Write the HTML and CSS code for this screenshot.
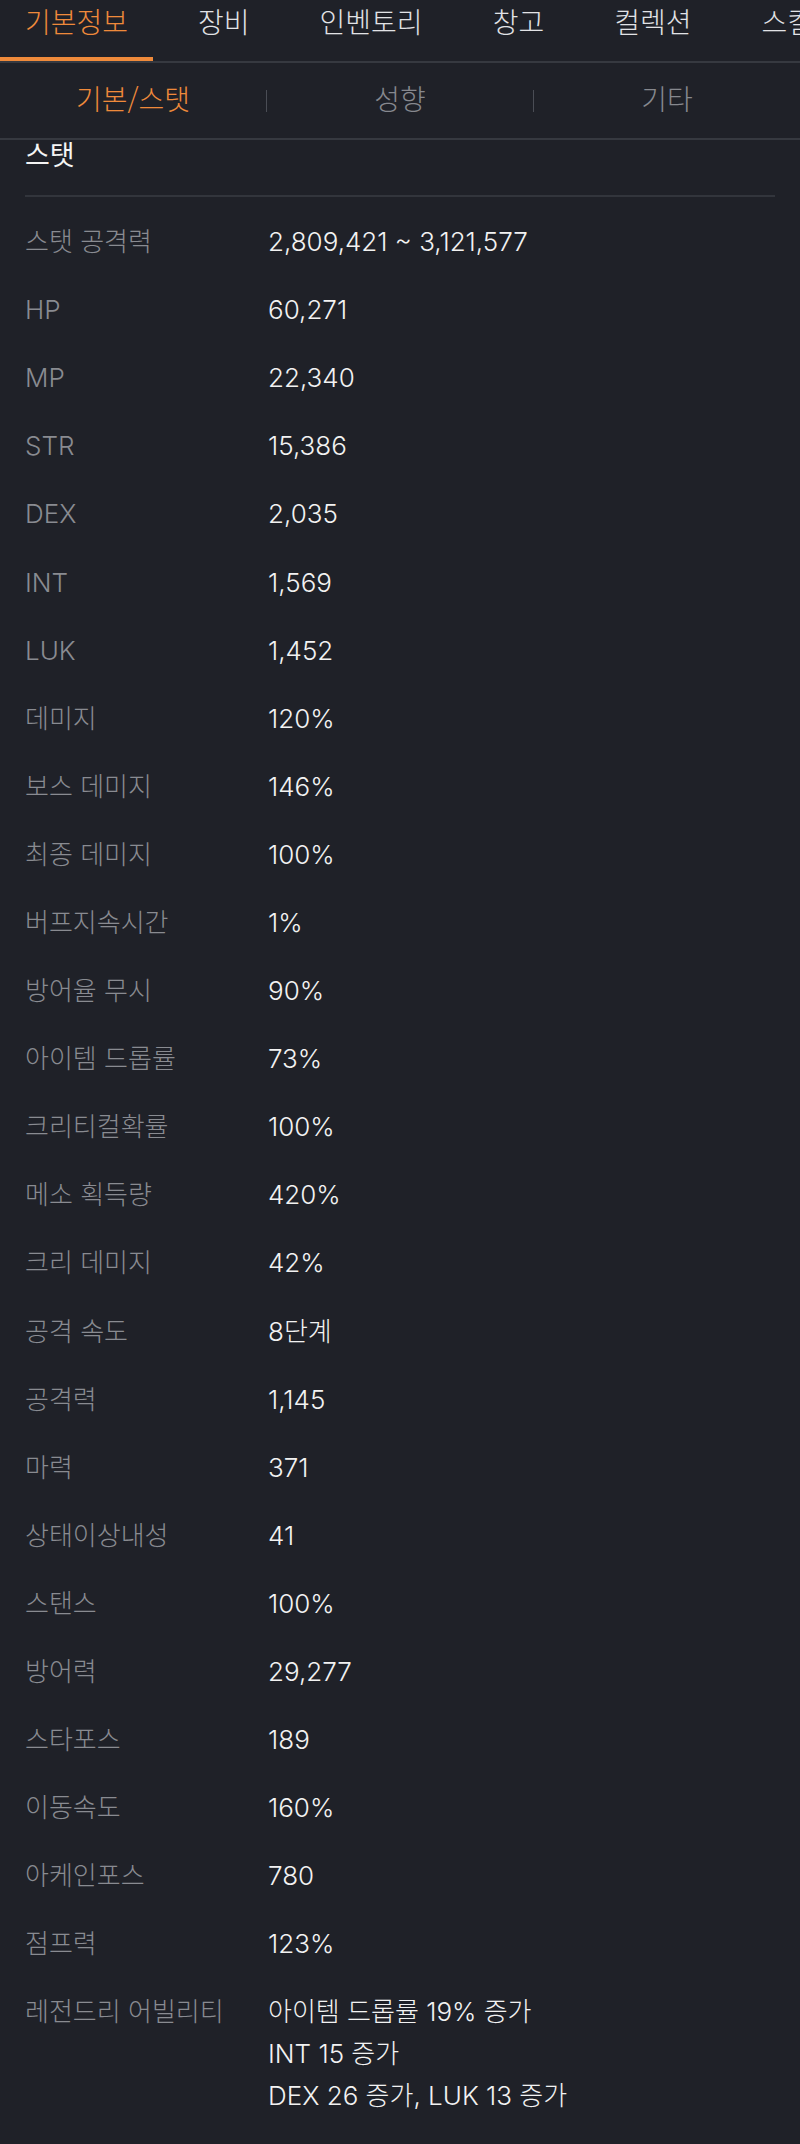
FILE: index.html
```html
<!DOCTYPE html>
<html lang="ko">
<head>
<meta charset="utf-8">
<title>기본정보 - 스탯</title>
<link rel="stylesheet" href="styles.css">
</head>
<body>
<nav class="tabs">
  <div class="tab active">기본정보</div>
  <div class="tab">장비</div>
  <div class="tab">인벤토리</div>
  <div class="tab">창고</div>
  <div class="tab">컬렉션</div>
  <div class="tab">스킬</div>
</nav>
<div class="subtabs">
  <div class="subtab active">기본/스탯</div>
  <span class="sep"></span>
  <div class="subtab">성향</div>
  <span class="sep"></span>
  <div class="subtab">기타</div>
</div>
<section class="stats">
  <h2 class="heading">스탯</h2>
  <div class="list">
    <div class="row"><span class="label">스탯 공격력</span><div class="value">2,809,421 ~ 3,121,577</div></div>
    <div class="row"><span class="label">HP</span><div class="value">60,271</div></div>
    <div class="row"><span class="label">MP</span><div class="value">22,340</div></div>
    <div class="row"><span class="label">STR</span><div class="value">15,386</div></div>
    <div class="row"><span class="label">DEX</span><div class="value">2,035</div></div>
    <div class="row"><span class="label">INT</span><div class="value">1,569</div></div>
    <div class="row"><span class="label">LUK</span><div class="value">1,452</div></div>
    <div class="row"><span class="label">데미지</span><div class="value">120%</div></div>
    <div class="row"><span class="label">보스 데미지</span><div class="value">146%</div></div>
    <div class="row"><span class="label">최종 데미지</span><div class="value">100%</div></div>
    <div class="row"><span class="label">버프지속시간</span><div class="value">1%</div></div>
    <div class="row"><span class="label">방어율 무시</span><div class="value">90%</div></div>
    <div class="row"><span class="label">아이템 드롭률</span><div class="value">73%</div></div>
    <div class="row"><span class="label">크리티컬확률</span><div class="value">100%</div></div>
    <div class="row"><span class="label">메소 획득량</span><div class="value">420%</div></div>
    <div class="row"><span class="label">크리 데미지</span><div class="value">42%</div></div>
    <div class="row"><span class="label">공격 속도</span><div class="value">8단계</div></div>
    <div class="row"><span class="label">공격력</span><div class="value">1,145</div></div>
    <div class="row"><span class="label">마력</span><div class="value">371</div></div>
    <div class="row"><span class="label">상태이상내성</span><div class="value">41</div></div>
    <div class="row"><span class="label">스탠스</span><div class="value">100%</div></div>
    <div class="row"><span class="label">방어력</span><div class="value">29,277</div></div>
    <div class="row"><span class="label">스타포스</span><div class="value">189</div></div>
    <div class="row"><span class="label">이동속도</span><div class="value">160%</div></div>
    <div class="row"><span class="label">아케인포스</span><div class="value">780</div></div>
    <div class="row"><span class="label">점프력</span><div class="value">123%</div></div>
    <div class="row"><span class="label">레전드리 어빌리티</span><div class="value"><div>아이템 드롭률 19% 증가</div><div>INT 15 증가</div><div>DEX 26 증가, LUK 13 증가</div></div></div>
  </div>
</section>
</body>
</html>
```

FILE: styles.css
```css
html {
  background: #1f2128;
}
body {
  margin: 0;
  background: #1f2128;
  font-family: Inter, "Noto Sans CJK KR", sans-serif;
  color: #f2f2f2;
}

.tabs {
  display: flex;
  gap: 20px;
  white-space: nowrap;
  overflow: hidden;
  border-bottom: 2px solid #363940;
}
.tab {
  position: relative;
  flex-shrink: 0;
  height: 61px;
  padding: 0 25px;
  font-family: "Noto Sans CJK KR", sans-serif;
  font-size: 28px;
  font-weight: 300;
  line-height: 43px;
  color: #e2e3e6;
}
.tab.active {
  color: #ef8a3b;
}
.tab.active::after {
  content: "";
  position: absolute;
  left: 0;
  right: 0;
  bottom: -2px;
  height: 6px;
  background: #ef8a3b;
}

.subtabs {
  display: grid;
  grid-template-columns: 1fr auto 1fr auto 1fr;
  align-items: center;
  height: 75px;
  border-bottom: 2px solid #363940;
}
.subtab {
  text-align: center;
  font-family: "Noto Sans CJK KR", sans-serif;
  font-size: 28px;
  font-weight: 300;
  line-height: 71px;
  padding-bottom: 4px;
  color: #86888e;
}
.subtab.active {
  color: #ef8a3b;
}
.sep {
  width: 1px;
  height: 22px;
  background: #4a4d55;
}

.stats {
  padding: 0 25px;
}
.heading {
  margin: 0;
  padding: 1px 0 28px;
  font-family: "Noto Sans CJK KR", sans-serif;
  font-size: 27px;
  font-weight: 400;
  line-height: 26px;
  color: #f4f4f4;
  border-bottom: 2px solid #32353c;
}
.list {
  padding-top: 11px;
}
.row {
  display: grid;
  grid-template-columns: 243px 1fr;
  padding: 13.05px 0;
  line-height: 42px;
}
.label {
  font-size: 26px;
  font-weight: 300;
  color: #898b91;
}
.value {
  font-size: 26px;
  font-weight: 300;
  color: #f2f2f2;
}
```
